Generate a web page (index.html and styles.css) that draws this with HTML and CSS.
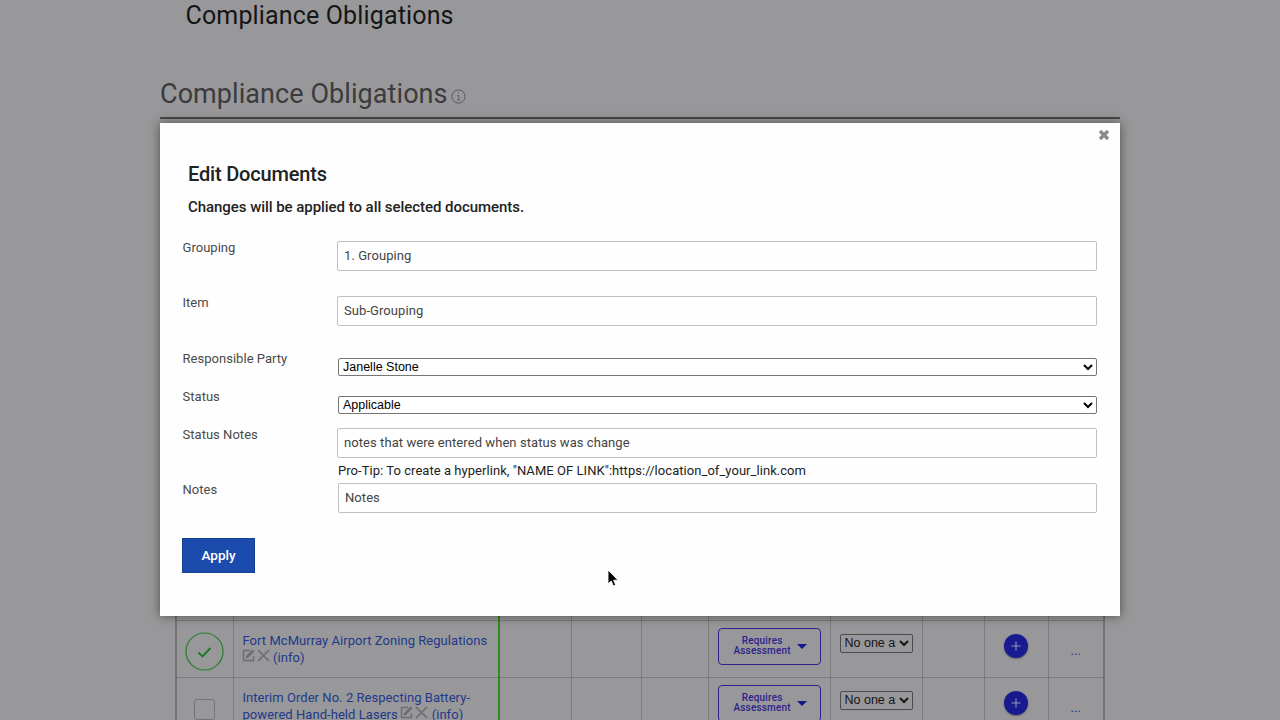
FILE: index.html
```html
<!DOCTYPE html>
<html lang="en">
<head>
    <meta charset="utf-8">
    <title>Compliance Obligations</title>
    <link rel="stylesheet" href="styles.css">
</head>
<body>
    <svg class="defs" width="0" height="0">
        <symbol id="edit" viewBox="0 0 13 13">
            <path d="M8 1.5H1.5v10h10V7" fill="none" stroke="currentColor" stroke-width="1.4"/>
            <path d="M3.5 9.5l.5-2.6L10.4.6l2 2L6 9z" fill="currentColor"/>
        </symbol>
        <symbol id="remove" viewBox="0 0 13 13">
            <path d="M1 1l11 11M12 1L1 12" fill="none" stroke="currentColor" stroke-width="1.7"/>
        </symbol>
    </svg>

    <div class="page">
        <h1>Compliance Obligations</h1>
        <h2>
            <span>Compliance Obligations</span>
            <svg class="info-icon" width="15" height="15" viewBox="0 0 15 15" fill="none" stroke="currentColor">
                <circle cx="7.5" cy="7.5" r="6.6"/>
                <path d="M6.2 6.5h1.5v4.3M6 10.9h3.2M7.1 3.8h1.1" stroke-width=".9"/>
            </svg>
        </h2>

        <!-- Obligations table, mostly behind the dialog -->
        <table class="obligations">
            <colgroup>
                <col class="c-check"><col class="c-name"><col class="c-a"><col class="c-b"><col class="c-c">
                <col class="c-status"><col class="c-person"><col class="c-d"><col class="c-add"><col class="c-more">
            </colgroup>
            <tr class="covered"><td></td><td></td><td></td><td></td><td></td><td></td><td></td><td></td><td></td><td></td></tr>
            <tr>
                <td>
                    <svg class="done" width="39" height="39" viewBox="0 0 39 39" fill="none">
                        <circle cx="19.5" cy="19.5" r="18.5" stroke="#287c2a" stroke-width="1.2"/>
                        <path d="M13.5 20.5l4 4 8-8.5" stroke="#1d7a20" stroke-width="1.9"/>
                    </svg>
                </td>
                <td class="name">Fort McMurray Airport Zoning Regulations <svg class="ico"><use href="#edit"/></svg> <svg class="ico"><use href="#remove"/></svg> (info)</td>
                <td></td><td></td><td></td>
                <td><div class="assess"><span>Requires<br>Assessment</span><i></i></div></td>
                <td class="person"><select><option>No one assigned</option></select></td>
                <td></td>
                <td><div class="add"><svg width="10" height="10" viewBox="0 0 10 10"><path d="M5 .5v9M.5 5h9" stroke="#9897b8" stroke-width="1.1"/></svg></div></td>
                <td class="more">...</td>
            </tr>
            <tr>
                <td><div class="box"></div></td>
                <td class="name"><div>Interim Order No. 2 Respecting Battery-</div><div>powered Hand-held Lasers <svg class="ico"><use href="#edit"/></svg> <svg class="ico"><use href="#remove"/></svg> (info)</div></td>
                <td></td><td></td><td></td>
                <td><div class="assess"><span>Requires<br>Assessment</span><i></i></div></td>
                <td class="person"><select><option>No one assigned</option></select></td>
                <td></td>
                <td><div class="add"><svg width="10" height="10" viewBox="0 0 10 10"><path d="M5 .5v9M.5 5h9" stroke="#9897b8" stroke-width="1.1"/></svg></div></td>
                <td class="more">...</td>
            </tr>
        </table>
    </div>

    <!-- Edit dialog -->
    <div class="modal">
        <svg class="close" width="12" height="12" viewBox="0 0 12 12"><path d="M2 2l8 8M10 2l-8 8" stroke="#8a8a8a" stroke-width="3.4"/></svg>
        <h3>Edit Documents</h3>
        <h4>Changes will be applied to all selected documents.</h4>
        <form>
            <label for="grouping">Grouping</label>
            <div><input id="grouping" type="text" value="1. Grouping"></div>
            <label for="item">Item</label>
            <div><input id="item" type="text" value="Sub-Grouping"></div>
            <label for="party">Responsible Party</label>
            <div class="pick"><select id="party"><option>Janelle Stone</option></select></div>
            <label for="status">Status</label>
            <div class="pick"><select id="status"><option>Applicable</option></select></div>
            <label class="low" for="statusNotes">Status Notes</label>
            <div>
                <input id="statusNotes" type="text" value="notes that were entered when status was change">
                <p class="tip">Pro-Tip: To create a hyperlink, "NAME OF LINK":https://location_of_your_link.com</p>
            </div>
            <label for="notes">Notes</label>
            <div><input id="notes" class="notes" type="text" value="Notes"></div>
        </form>
        <button class="apply" type="button">Apply</button>
    </div>

    <svg class="cursor" width="14" height="20" viewBox="0 0 14 20">
        <path d="M1 1v14l3.2-3 2.2 5 2.3-1-2.1-4.8H11z" fill="#000" stroke="#fff" stroke-width=".9"/>
    </svg>
</body>
</html>
```

FILE: styles.css
```css
* { box-sizing: border-box; }
body {
    margin: 0;
    height: 720px;
    overflow: hidden;
    background: #98989a;
    font-family: Roboto, sans-serif;
    font-size: 13px;
    color: #222;
}
h1, h2, h3, h4, p { margin: 0; }
.defs { position: absolute; }
.page { width: 960px; margin: 0 auto; }
h1 {
    height: 70px;
    padding-left: 25.5px;
    font-size: 25px;
    line-height: 31px;
    font-weight: 400;
    letter-spacing: 0.15px;
    color: #151515;
}
h2 {
    display: flex;
    height: 49px;
    border-bottom: 2px solid #4a4a4b;
    font-size: 27px;
    line-height: 49px;
    font-weight: 400;
    letter-spacing: 0.07px;
    color: #3b3b3d;
}
.info-icon { margin: 19px 0 0 3px; color: #59595b; }

/* table */
.obligations {
    width: 930px;
    margin: 480px 0 0 15px;
    table-layout: fixed;
    border-collapse: collapse;
    border: 2px solid #737375;
}
.obligations td {
    height: 57px;
    padding: 0;
    border: 1px solid #7b7b7e;
    vertical-align: top;
}
.obligations .covered td { height: 20px; }
.obligations td:nth-child(2) { border-right: 2px solid #338a1c; }
.c-check { width: 57px; }
.c-name { width: 266px; }
.c-a { width: 72px; }
.c-b { width: 70px; }
.c-c { width: 67px; }
.c-status { width: 122px; }
.c-person { width: 92px; }
.c-d { width: 62px; }
.c-add { width: 64px; }
.c-more { width: 56px; }
.done { display: block; margin: 11px 0 0 8px; }
.box {
    width: 21px;
    height: 21px;
    margin: 21px 0 0 17px;
    border: 1px solid #747476;
    border-radius: 3px;
}
.obligations .name {
    padding: 11px 9px 0;
    font-size: 13px;
    line-height: 17px;
    letter-spacing: 0.05px;
    color: #22398a;
}
.ico { width: 13px; height: 13px; margin-left: -1px; color: #6e6e70; }
.assess {
    display: flex;
    align-items: center;
    justify-content: space-between;
    width: 103px;
    height: 37px;
    margin: 7px 0 0 9px;
    padding: 0 13px 0 15px;
    border: 1px solid #2e218c;
    border-radius: 4px;
    font-size: 10px;
    line-height: 10.5px;
    font-weight: 500;
    text-align: center;
    letter-spacing: 0.17px;
    color: #2e218c;
}
.assess i { border: 5px solid transparent; border-top-color: #17148c; border-bottom: 0; }
.person select {
    display: block;
    width: 73px;
    height: 19px;
    margin: 13px 0 0 9px;
    background: #98989a;
    border: 1px solid #4b4b4d;
    color: #151515;
}
.add {
    display: flex;
    align-items: center;
    justify-content: center;
    width: 24px;
    height: 24px;
    margin: 13px auto 0;
    border-radius: 50%;
    background: #181a8f;
    box-shadow: 0 1px 2px rgba(0, 0, 0, 0.35);
}
.obligations .more { padding-top: 22px; text-align: center; color: #22398a; }

/* dialog */
.modal {
    position: absolute;
    left: 160px;
    top: 123px;
    width: 960px;
    height: 493px;
    padding: 38px 23px 0 22px;
    background: #fefefe;
    box-shadow: 0 0 10px rgba(0, 0, 0, 0.5);
}
.close { position: absolute; top: 6px; right: 10px; }
h3 {
    padding-left: 6px;
    font-size: 20px;
    line-height: 26px;
    font-weight: 500;
    letter-spacing: -0.18px;
}
h4 {
    padding: 10px 0 23px 6px;
    font-size: 15px;
    line-height: 20px;
    font-weight: 500;
    letter-spacing: -0.05px;
}
form {
    display: grid;
    grid-template-columns: 155px 760px;
    grid-template-rows: 55px 56px 38px 37px 56px 56px;
}
label { padding-left: 0.5px; line-height: 16px; letter-spacing: 0.03px; color: #4a4a4a; }
.low { line-height: 17px; }
input {
    display: block;
    width: 100%;
    height: 30px;
    margin-top: 1px;
    padding: 0 6px 1px;
    border: 1px solid #c0c0c0;
    border-radius: 2px;
    background: #fefefe;
    font: 13px Roboto, sans-serif;
    letter-spacing: 0.07px;
    color: #444;
}
#statusNotes { margin-top: 2px; }
.notes { width: 759px; margin-left: 1px; }
select {
    padding: 0;
    border: 1px solid #767676;
    border-radius: 2px;
    background: #fff;
    font: 12.5px "Liberation Sans", sans-serif;
    color: #000;
}
.pick select { display: block; width: 759px; height: 18px; margin: 7px 0 0 1px; }
.tip { padding: 4px 0 0 1px; line-height: 18px; letter-spacing: 0.05px; }
.apply {
    display: block;
    width: 73px;
    height: 35px;
    margin: 0;
    padding-bottom: 2px;
    border: 1px solid #18408f;
    background: #1c4bae;
    font: 500 13.5px Roboto, sans-serif;
    color: #fff;
}
.cursor { position: absolute; left: 607px; top: 569px; }
```
